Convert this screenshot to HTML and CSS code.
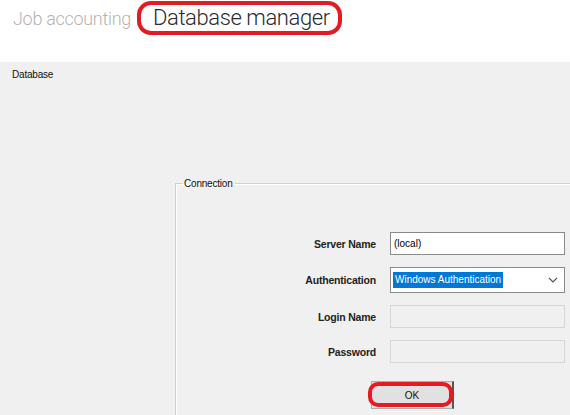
FILE: index.html
```html
<!DOCTYPE html>
<html lang="en">
<head>
  <meta charset="UTF-8" />
  <meta name="viewport" content="width=device-width, initial-scale=1.0"/>
  <title>Database manager</title>
  <link rel="stylesheet" href="styles.css">
</head>
<body>
  <div class="tabs">
    <span class="tab">Job accounting</span>
    <span class="tab tab-active">Database manager</span>
  </div>

  <div class="window">
    <div class="window-title">Database</div>

    <fieldset class="group">
      <legend>Connection</legend>

      <div class="form">
        <label for="server">Server Name</label>
        <input type="text" id="server" class="field" value="(local)" />

        <label>Authentication</label>
        <div class="field combo">
          <span class="combo-value">Windows Authentication</span>
          <svg class="combo-arrow" width="10" height="6" viewBox="0 0 10 6">
            <path d="M1 1 L5 5 L9 1" fill="none" stroke="#555" stroke-width="1.2"/>
          </svg>
        </div>

        <label for="login">Login Name</label>
        <input type="text" id="login" class="field" disabled />

        <label for="password">Password</label>
        <input type="password" id="password" class="field" disabled />
      </div>

      <div class="actions">
        <span class="marked">
          <button class="btn">OK</button>
        </span>
      </div>
    </fieldset>
  </div>
</body>
</html>
```

FILE: styles.css
```css
body {
  margin: 0;
  padding: 0;
  height: 415px;
  overflow: hidden;
  background-color: #f0f0f0;
  font-family: 'Liberation Sans', Arial, sans-serif;
}

/* top tab strip */
.tabs {
  height: 62px;
  background-color: #fff;
  display: flex;
  align-items: flex-start;
  padding: 1px 0 0 13px;
  box-sizing: border-box;
  font-family: Roboto, 'Liberation Sans', sans-serif;
  font-weight: 300;
}

.tab {
  font-size: 18px;
  color: #b3b3b3;
  line-height: 25px;
  padding-top: 5px;
  letter-spacing: -0.3px;
}

.tab-active {
  margin-left: 6px;
  padding: 1px 8px 1px 12px;
  font-size: 22px;
  line-height: 24px;
  color: #2a2a33;
  border: 4px solid #e31b23;
  border-radius: 14px;
  letter-spacing: -0.4px;
}

/* dialog area */
.window {
  background-color: #f0f0f0;
  padding-top: 7px;
}

.window-title {
  font-size: 10px;
  color: #111;
  padding-left: 12px;
  letter-spacing: -0.2px;
}

.group {
  margin: 98px 0 0 175px;
  width: 420px;
  padding: 0 0 8px;
  border: 1px solid #d0d0d0;
  box-shadow: inset 1px 1px 0 #fff, 1px 1px 0 #fff;
}

.group legend {
  margin-left: 6px;
  padding: 0 2px;
  font-size: 10px;
  color: #111;
  letter-spacing: -0.2px;
}

.form {
  display: grid;
  grid-template-columns: 200px 175px;
  column-gap: 14px;
  row-gap: 12px;
  align-items: center;
  margin-top: 43px;
}

.form label {
  text-align: right;
  font-size: 10.5px;
  font-weight: bold;
  color: #222;
  letter-spacing: -0.2px;
}

.field {
  height: 23px;
  box-sizing: border-box;
  margin: 0;
  padding: 0 3px;
  font-family: 'Liberation Sans', Arial, sans-serif;
  font-size: 10px;
  color: #000;
  background-color: #fff;
  border: 1px solid #8a8a8a;
  border-radius: 0;
  outline: none;
}

.field:disabled {
  background-color: #f0f0f0;
  border-color: #d6d6d6;
}

.combo {
  height: 26px;
  display: flex;
  align-items: center;
  justify-content: space-between;
  padding: 0 6px 0 2px;
}

.combo-value {
  background-color: #0078d7;
  color: #fff;
  padding: 2px 2px;
  line-height: 12px;
}

.actions {
  padding: 18px 0 6px 195px;
}

.marked {
  position: relative;
  display: inline-block;
}

/* red ring drawn on top of the button */
.marked::after {
  content: "";
  position: absolute;
  left: -3px;
  top: 1px;
  right: 1px;
  bottom: 2px;
  border: 4px solid #e31b23;
  border-radius: 10px;
}

.btn {
  width: 83px;
  height: 28px;
  font-family: 'Liberation Sans', Arial, sans-serif;
  font-size: 10px;
  color: #111;
  background-color: #e1e1e1;
  border: 1px solid #adadad;
  border-right: 2px solid #555;
  padding: 0;
}
```
